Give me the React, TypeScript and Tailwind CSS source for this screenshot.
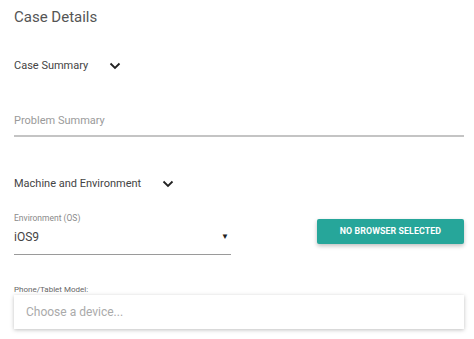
import React from 'react';

const Chevron = () => (
  <svg width="12" height="8" viewBox="0 0 12 8" className="ml-[21px]">
    <path d="M1.5 1.5 L6 6 L10.5 1.5" fill="none" stroke="#222" strokeWidth="1.8" />
  </svg>
);

const App: React.FC = () => {
  return (
    <div className="w-[474px] h-[339px] bg-white overflow-hidden pl-[14px] pr-[10px] font-['Roboto',sans-serif]">
      {/* Header */}
      <h1 className="pt-[7px] text-[15px] leading-[20px] text-[#555]">Case Details</h1>

      {/* Case summary section */}
      <div className="mt-[31px] flex items-center h-[16px]">
        <span className="text-[11px] text-[#444]">Case Summary</span>
        <Chevron />
      </div>

      <div className="mt-[33px] border-b-2 border-[#c4c4c4] h-[30px] flex items-center">
        <span className="text-[11px] text-[#9a9a9a]">Problem Summary</span>
      </div>

      {/* Machine and environment */}
      <div className="mt-[39px] flex items-center h-[16px]">
        <span className="text-[11px] text-[#444]">Machine and Environment</span>
        <Chevron />
      </div>

      <div className="mt-[20px] flex items-start">
        <div className="w-[217px]">
          <div className="text-[8.5px] leading-[12px] text-[#8a8a8a]">Environment (OS)</div>
          <div className="mt-[2px] h-[29px] pb-[6px] flex items-center justify-between border-b border-[#9a9a9a]">
            <span className="text-[12px] text-[#444]">iOS9</span>
            <span className="text-[8px] text-[#222] mr-[2px]">▼</span>
          </div>
        </div>
        <button className="ml-auto mt-[7px] w-[147px] h-[25px] bg-[#26a69a] text-white text-[8.8px] font-bold tracking-[0.1px] rounded-[2px] shadow-[0_2px_4px_rgba(0,0,0,0.25)]">
          NO BROWSER SELECTED
        </button>
      </div>

      <div className="mt-[30px] text-[8px] leading-[10px] text-[#666]">Phone/Tablet Model:</div>
      <div className="h-[34px] flex items-center px-[12px] bg-white shadow-[0_1px_4px_rgba(0,0,0,0.25)]">
        <span className="text-[12px] text-[#aaa]">Choose a device...</span>
      </div>
    </div>
  );
};

export default App;
